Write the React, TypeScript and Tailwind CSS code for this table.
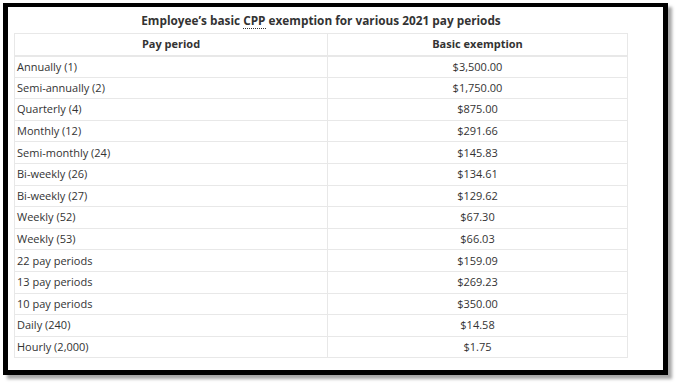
const rows: [string, string][] = [
  ['Annually (1)', '$3,500.00'],
  ['Semi-annually (2)', '$1,750.00'],
  ['Quarterly (4)', '$875.00'],
  ['Monthly (12)', '$291.66'],
  ['Semi-monthly (24)', '$145.83'],
  ['Bi-weekly (26)', '$134.61'],
  ['Bi-weekly (27)', '$129.62'],
  ['Weekly (52)', '$67.30'],
  ['Weekly (53)', '$66.03'],
  ['22 pay periods', '$159.09'],
  ['13 pay periods', '$269.23'],
  ['10 pay periods', '$350.00'],
  ['Daily (240)', '$14.58'],
  ['Hourly (2,000)', '$1.75'],
];

export default function App() {
  return (
    <div className="w-[678px] h-[384px] bg-white pt-[3px] pl-[3px]" style={{ fontFamily: '"Open Sans", sans-serif' }}>
      <div className="w-[665px] h-[372px] border-[5px] border-t-4 border-black bg-white shadow-[4px_4px_3px_rgba(0,0,0,0.35)] pl-[6px]">
        <table className="w-[614px] border-collapse table-fixed text-[#333]">
          <caption className="h-[26px] pt-[4px] text-[11.8px] font-bold leading-[18px] text-[#333]">
            Employee’s basic{' '}
            <abbr title="Canada Pension Plan" className="no-underline border-b border-dotted border-[#333]">CPP</abbr>{' '}
            exemption for various 2021 pay periods
          </caption>
          <thead>
            <tr className="h-[22px]">
              <th className="w-[313px] border border-[#e8e8e8] border-b-2 text-[11px] font-bold text-center">Pay period</th>
              <th className="border border-[#e8e8e8] border-b-2 text-[11px] font-bold text-center">Basic exemption</th>
            </tr>
          </thead>
          <tbody>
            {rows.map(([period, amount]) => (
              <tr key={period} className="h-[21.6px]">
                <td className="border border-[#e8e8e8] px-[2px] text-[11px] leading-[14px]">{period}</td>
                <td className="border border-[#e8e8e8] text-[11px] leading-[14px] text-center">{amount}</td>
              </tr>
            ))}
          </tbody>
        </table>
      </div>
    </div>
  );
}
